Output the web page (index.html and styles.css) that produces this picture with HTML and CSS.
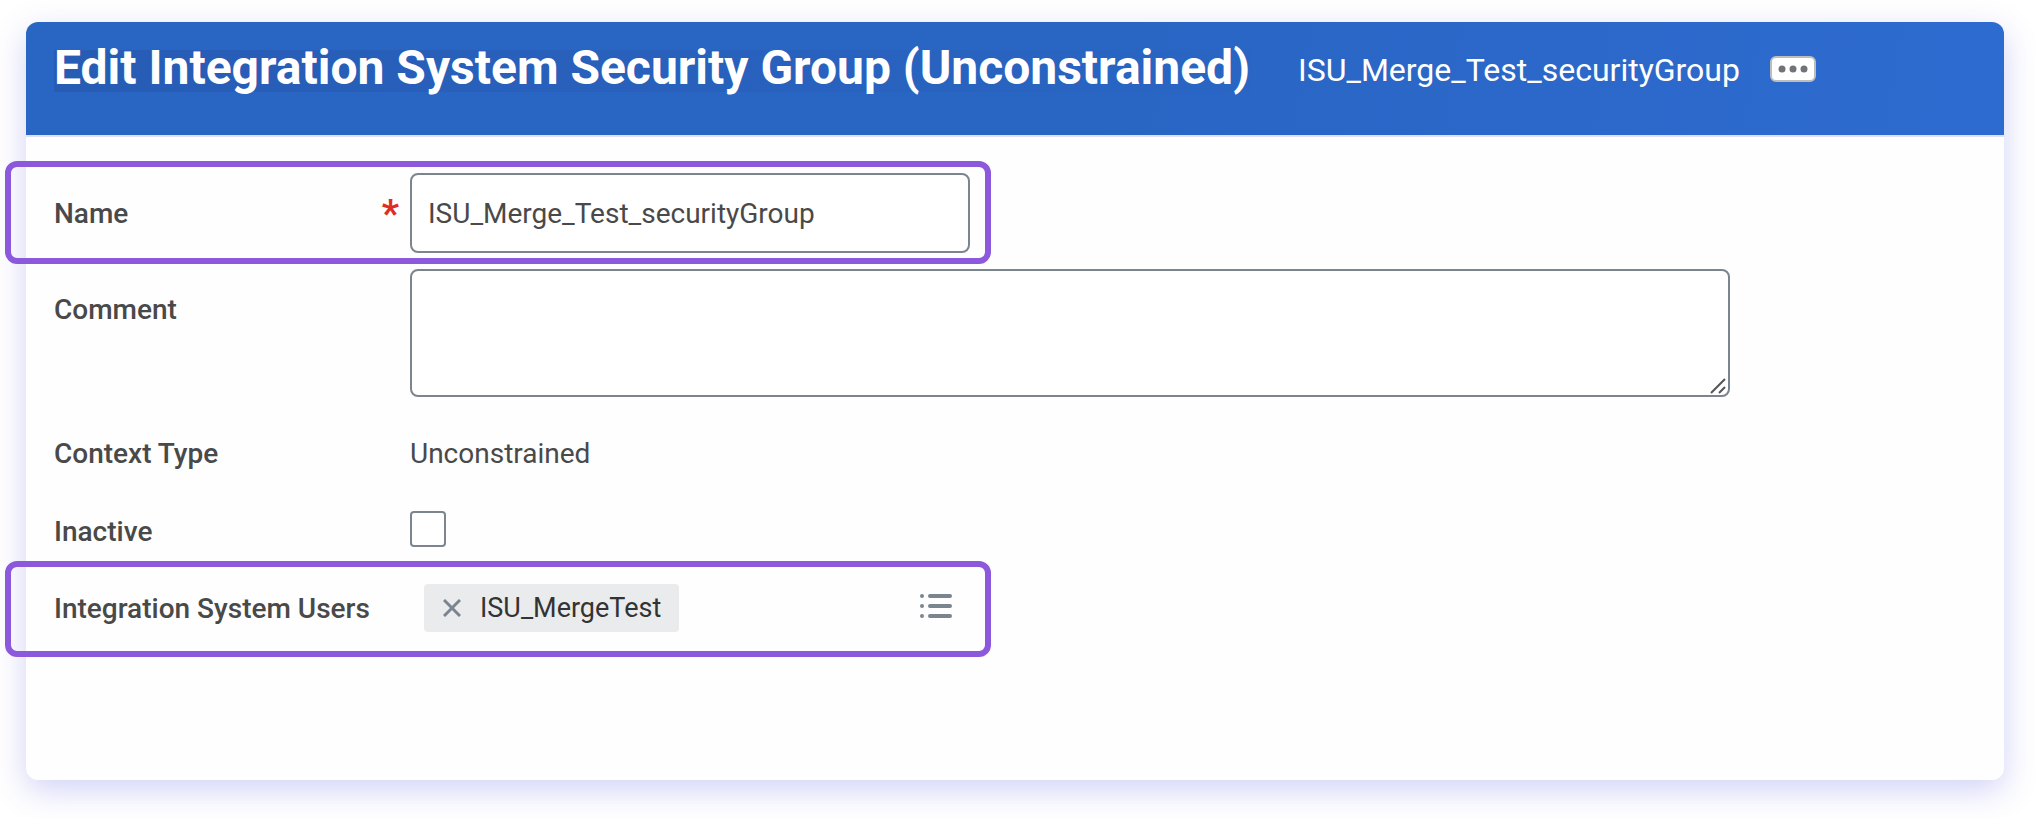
FILE: index.html
```html
<!DOCTYPE html>
<html lang="en">
<head>
<meta charset="utf-8">
<title>Edit Integration System Security Group</title>
<link rel="stylesheet" href="styles.css">
</head>
<body>
<main class="card">
  <header class="card-header">
    <h1 class="title">Edit Integration System Security Group (Unconstrained)</h1>
    <span class="subject">ISU_Merge_Test_securityGroup</span>
    <button class="more" type="button" aria-label="Related actions">
      <svg width="30" height="8" viewBox="0 0 30 8" fill="currentColor" aria-hidden="true"><circle cx="4" cy="4" r="3.5"/><circle cx="15" cy="4" r="3.5"/><circle cx="26" cy="4" r="3.5"/></svg>
    </button>
  </header>
  <form class="form">
    <div class="row row-name highlight">
      <label class="label" for="name">Name <span class="required" aria-hidden="true">*</span></label>
      <input class="text-input" id="name" type="text" value="ISU_Merge_Test_securityGroup" required>
    </div>
    <div class="row row-comment">
      <label class="label" for="comment">Comment</label>
      <div class="textarea-wrap">
        <textarea class="textarea" id="comment"></textarea>
        <svg class="grip" width="16" height="16" viewBox="0 0 16 16" fill="none" stroke="#555" stroke-width="2" aria-hidden="true"><path d="M1 15 15 1M9 15l6-6"/></svg>
      </div>
    </div>
    <div class="row row-context">
      <span class="label">Context Type</span>
      <span class="value">Unconstrained</span>
    </div>
    <div class="row row-inactive">
      <label class="label" for="inactive">Inactive</label>
      <input class="checkbox" id="inactive" type="checkbox">
    </div>
    <div class="row row-users highlight">
      <span class="label">Integration System Users</span>
      <div class="picker">
        <span class="chip">
          <button class="icon-button" type="button" aria-label="Remove ISU_MergeTest">
            <svg width="18" height="18" viewBox="0 0 18 18" fill="none" stroke="currentColor" stroke-width="3" aria-hidden="true"><path d="m1 1 16 16M17 1 1 17"/></svg>
          </button>
          ISU_MergeTest
        </span>
        <button class="icon-button open-list" type="button" aria-label="Open list">
          <svg width="32" height="24" viewBox="0 0 32 24" fill="currentColor" aria-hidden="true"><circle cx="2" cy="2" r="2"/><circle cx="2" cy="12" r="2"/><circle cx="2" cy="22" r="2"/><rect x="8" width="24" height="4" rx="2"/><rect x="8" y="10" width="24" height="4" rx="2"/><rect x="8" y="20" width="24" height="4" rx="2"/></svg>
        </button>
      </div>
    </div>
  </form>
</main>
</body>
</html>
```
FILE: styles.css
```css
* {
  box-sizing: border-box;
}

body {
  display: flex;
  min-height: 100vh;
  margin: 0;
  padding: 22px 31px 38px 26px;
  background: #fff;
  color: #494949;
  font-family: Roboto, "Liberation Sans", sans-serif;
  font-size: 28px;
  line-height: 40px;
}

.card {
  flex: 1;
  min-width: 0;
  border-radius: 12px;
  background: #fefefe;
  box-shadow: 0 10px 32px rgba(76, 80, 220, 0.26);
}

.card-header {
  display: flex;
  align-items: flex-start;
  padding: 28px;
  border-bottom: 2px solid #dfe1e6;
  border-radius: 12px 12px 0 0;
  background: linear-gradient(100deg, #2965c3 55%, #2e6bd0);
  color: #fff;
}

.title {
  margin: 0 0 15px;
  padding-bottom: 6px;
  background: linear-gradient(90deg, #275cb5, #2965c3);
  font-size: 48px;
  font-weight: 700;
  line-height: 36px;
  white-space: nowrap;
}

.subject {
  margin-left: 48px;
  font-size: 32px;
  white-space: nowrap;
}

.more {
  display: flex;
  align-items: center;
  justify-content: center;
  width: 46px;
  height: 26px;
  margin: 6px 0 0 30px;
  padding: 0;
  border: 2px solid #bdbdbd;
  border-radius: 6px;
  background: #fff;
  color: #717378;
}

.form {
  max-width: 1732px;
  padding: 36px 28px;
}

.row {
  display: grid;
  grid-template-columns: 356px minmax(0, 1fr);
  align-items: center;
  position: relative;
}

.row-name,
.row-users {
  max-width: 916px;
}

.row-comment {
  align-items: start;
  margin: 16px 0 37px;
}

.row-comment .label {
  padding-top: 21px;
}

.row-inactive {
  align-items: start;
  margin: 37px 0 32px;
}

.row-inactive .label {
  padding-top: 1px;
}

.highlight::after {
  content: "";
  position: absolute;
  inset: -12px -21px -11px -49px;
  border: 6px solid #8d59dc;
  border-radius: 12px;
  pointer-events: none;
}

.row-users::after {
  inset: -23px -21px -25px -49px;
}

.label {
  display: flex;
  align-items: center;
  justify-content: space-between;
  font-weight: 500;
}

.highlight .label {
  padding-top: 2px;
}

.required {
  padding-right: 11px;
  color: #de2e21;
  font-size: 38px;
  font-weight: 700;
}

.text-input,
.textarea {
  display: block;
  width: 100%;
  margin: 0;
  border: 2px solid #7b858f;
  border-radius: 8px;
  background: #fff;
  color: inherit;
  font: inherit;
}

.text-input {
  height: 80px;
  padding: 0 16px;
}

.textarea-wrap {
  position: relative;
}

.textarea {
  height: 128px;
  padding: 16px;
  resize: none;
}

.grip {
  position: absolute;
  right: 4px;
  bottom: 3px;
}

.checkbox {
  width: 36px;
  height: 36px;
  margin: 0;
  appearance: none;
  border: 2px solid #7b858f;
  border-radius: 4px;
  background: #fff;
}

.checkbox:checked {
  background: #2965c3;
}

.picker {
  display: flex;
  align-items: center;
  justify-content: space-between;
  padding: 0 18px 0 14px;
}

.chip {
  display: flex;
  align-items: center;
  gap: 19px;
  height: 48px;
  padding: 0 18px 0 19px;
  border-radius: 4px;
  background: #e9ebed;
  color: #333;
  font-size: 27px;
}

.icon-button {
  display: flex;
  padding: 0;
  border: 0;
  background: none;
  color: #7b858f;
}

.open-list {
  padding-bottom: 4px;
}
```
